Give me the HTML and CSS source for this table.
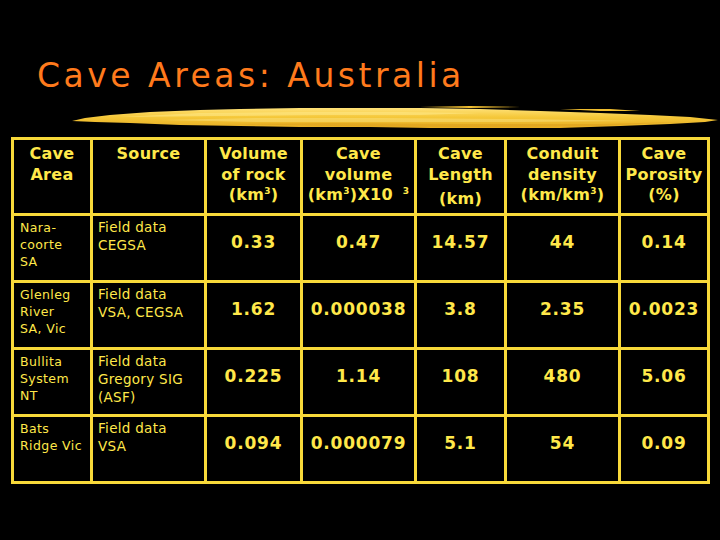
FILE: index.html
```html
<!DOCTYPE html>
<html>
<head>
<meta charset="utf-8">
<link rel="stylesheet" href="styles.css">
</head>
<body>
<div class="slide">
  <h1 class="title">Cave Areas: Australia</h1>
  <svg class="brush" width="720" height="30" viewBox="0 104 720 30" xmlns="http://www.w3.org/2000/svg">
    <defs>
      <linearGradient id="g" x1="0" y1="0" x2="0" y2="1">
        <stop offset="0" stop-color="#ffe27a"/>
        <stop offset="0.45" stop-color="#f5c83a"/>
        <stop offset="1" stop-color="#e6ad22"/>
      </linearGradient>
    </defs>
    <polygon fill="url(#g)" points="72,121 85,118 110,115 150,112 200,110 240,109 300,108 360,108 420,108 480,109 540,111 600,113 650,115 690,117 718,120 705,122 670,124 620,126 560,128 500,128 430,128 370,127 300,127 240,126 180,125 130,123 95,122"/>
    <polygon fill="#ffe98a" opacity="0.55" points="120,117 200,113 300,112 400,112 480,113 420,115 320,115 220,116"/>
    <polygon fill="#fff0a0" opacity="0.35" points="160,120 260,118 380,118 520,119 640,121 520,122 380,122 260,122"/>
    <polygon fill="#d99a18" opacity="0.45" points="220,124 330,123 460,124 600,124 680,122 600,126 460,127 330,126"/>
    <polygon fill="#f0be30" points="420,107 470,106 520,107 470,108"/>
    <polygon fill="#f0be30" points="560,109 610,109 640,111 600,111"/>
  </svg>
  <table class="grid">
    <colgroup>
      <col class="c1"><col class="c2"><col class="c3"><col class="c4"><col class="c5"><col class="c6"><col class="c7">
    </colgroup>
    <thead>
      <tr class="head">
        <th>Cave<br>Area</th>
        <th>Source</th>
        <th>Volume<br>of rock<br>(km<sup>3</sup>)</th>
        <th>Cave<br>volume<br>(km<sup>3</sup>)X10 <sup class="sp">3</sup></th>
        <th>Cave<br>Length<br><span class="low">(km)</span></th>
        <th>Conduit<br>density<br>(km/km<sup>3</sup>)</th>
        <th>Cave<br>Porosity<br>(%)</th>
      </tr>
    </thead>
    <tbody>
      <tr>
        <td class="area">Nara-<br>coorte<br>SA</td>
        <td class="src">Field data<br>CEGSA</td>
        <td class="num">0.33</td><td class="num">0.47</td><td class="num">14.57</td><td class="num">44</td><td class="num">0.14</td>
      </tr>
      <tr>
        <td class="area">Glenleg<br>River<br>SA, Vic</td>
        <td class="src">Field data<br>VSA, CEGSA</td>
        <td class="num">1.62</td><td class="num">0.000038</td><td class="num">3.8</td><td class="num">2.35</td><td class="num">0.0023</td>
      </tr>
      <tr>
        <td class="area">Bullita<br>System<br>NT</td>
        <td class="src">Field data<br>Gregory SIG<br>(ASF)</td>
        <td class="num">0.225</td><td class="num">1.14</td><td class="num">108</td><td class="num">480</td><td class="num">5.06</td>
      </tr>
      <tr>
        <td class="area">Bats<br>Ridge Vic</td>
        <td class="src">Field data<br>VSA</td>
        <td class="num">0.094</td><td class="num">0.000079</td><td class="num">5.1</td><td class="num">54</td><td class="num">0.09</td>
      </tr>
    </tbody>
  </table>
</div>
</body>
</html>
```
FILE: styles.css
```css
html, body {
  margin: 0;
  padding: 0;
  background: #000;
}
.slide {
  width: 720px;
  height: 540px;
  background: #000;
  overflow: hidden;
}
.title {
  margin: 0;
  padding: 56px 0 0 37px;
  height: 48px;
  font-family: "DejaVu Sans", sans-serif;
  font-weight: normal;
  font-size: 33px;
  line-height: 40px;
  letter-spacing: 3.5px;
  color: #ff7a1c;
}
.brush {
  display: block;
}
.grid {
  margin: 3px 0 0 11px;
  border-collapse: collapse;
  table-layout: fixed;
  width: 696px;
  color: #ffe84a;
  font-family: "DejaVu Sans", sans-serif;
}
.c1 { width: 79px; }
.c2 { width: 114px; }
.c3 { width: 96px; }
.c4 { width: 114px; }
.c5 { width: 90px; }
.c6 { width: 114px; }
.c7 { width: 89px; }
.grid th, .grid td {
  border: 3px solid #f8d93a;
  vertical-align: top;
  padding: 0;
}
.head th {
  height: 76px;
  font-size: 16px;
  line-height: 20.5px;
  font-weight: bold;
  text-align: center;
  padding-top: 4px;
  box-sizing: border-box;
  letter-spacing: 0.3px;
}
.grid sup {
  font-size: 9px;
  line-height: 0;
  vertical-align: 6px;
}
.grid sup.sp {
  margin-left: 4px;
}
.low {
  display: inline-block;
  margin-top: 4px;
}
.grid tbody td {
  height: 67px;
  box-sizing: border-box;
}
.area {
  font-size: 12.5px;
  line-height: 17px;
  padding: 3px 0 0 6px !important;
  text-align: left;
  letter-spacing: 0.4px;
}
.src {
  font-size: 13.5px;
  line-height: 18px;
  padding: 2px 0 0 5px !important;
  text-align: left;
  letter-spacing: 0.3px;
}
.num {
  font-size: 17px;
  line-height: 20px;
  padding-top: 16px !important;
  text-align: center;
  font-weight: bold;
  letter-spacing: 0.8px;
}
```
